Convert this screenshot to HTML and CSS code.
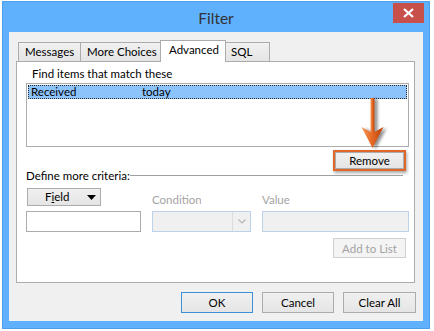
FILE: index.html
```html
<!DOCTYPE html>
<html lang="en">
<head>
  <meta charset="UTF-8">
  <title>Filter</title>
  <link rel="stylesheet" href="styles.css">
</head>
<body>
  <div class="window">
    <div class="titlebar">
      <span class="title">Filter</span>
      <button class="close" aria-label="Close">
        <svg width="11" height="10" viewBox="0 0 11 10"><path d="M1 1 L10 9 M10 1 L1 9" stroke="#fff" stroke-width="2.2"/></svg>
      </button>
    </div>
    <div class="client">
      <div class="tabs">
        <div class="tab tab-messages">Messages</div>
        <div class="tab tab-more">More Choices</div>
        <div class="tab tab-advanced active">Advanced</div>
        <div class="tab tab-sql">SQL</div>
      </div>
      <div class="panel">
        <div class="find-label">Find items that match these</div>
        <div class="listbox">
          <div class="list-row selected">
            <span class="col-field">Received</span>
            <span class="col-cond">today</span>
          </div>
        </div>
        <div class="remove-row">
          <div class="highlight">
            <button class="btn btn-remove">Remove</button>
          </div>
        </div>
        <div class="section-head">
          <span>Define more criteria:</span>
          <span class="rule"></span>
        </div>
        <div class="criteria">
          <button class="btn btn-field"><span>F<u>i</u>eld</span>
            <svg width="9" height="5" viewBox="0 0 9 5"><path d="M0 0 H9 L4.5 5 Z" fill="#000"/></svg>
          </button>
          <div class="crit-label cond-label">Condition</div>
          <div class="crit-label">Value</div>
          <input class="text-input" type="text">
          <div class="combo disabled">
            <span class="combo-text"></span>
            <span class="combo-btn">
              <svg width="8" height="5" viewBox="0 0 8 5"><path d="M0.5 0.5 L4 4 L7.5 0.5" stroke="#b5b5b5" stroke-width="1.2" fill="none"/></svg>
            </span>
          </div>
          <input class="text-input disabled" type="text" disabled>
        </div>
        <div class="add-row">
          <button class="btn btn-add" disabled>Add to List</button>
        </div>
        <svg class="callout-arrow" width="30" height="56" viewBox="0 0 30 56">
          <defs>
            <linearGradient id="arrowFill" x1="0" x2="1" y1="0" y2="0">
              <stop offset="0" stop-color="#f59a5e"/>
              <stop offset="0.45" stop-color="#e86a24"/>
              <stop offset="1" stop-color="#b8420c"/>
            </linearGradient>
          </defs>
          <rect x="10.5" y="3" width="4" height="36" fill="url(#arrowFill)"/>
          <path d="M1.5 32 L12.5 38 L23.5 32 L12.5 53 Z" fill="url(#arrowFill)"/>
        </svg>
      </div>
      <div class="actions">
        <button class="btn btn-dialog default">OK</button>
        <button class="btn btn-dialog">Cancel</button>
        <button class="btn btn-dialog btn-clear">Clear All</button>
      </div>
    </div>
  </div>
</body>
</html>
```

FILE: styles.css
```css
body {
  margin: 0;
  background: #fff;
  font-family: Lato, 'Noto Sans', sans-serif;
  font-size: 11.5px;
  color: #000;
}
.window {
  margin: 1px 0 0 2px;
  width: 428px;
  height: 328px;
  box-sizing: border-box;
  background: #5fb1fd;
  border: 1px solid #4f9fe8;
  padding: 0 6px 7px;
  display: flex;
  flex-direction: column;
}
.titlebar {
  position: relative;
  height: 30px;
  display: flex;
  align-items: center;
  justify-content: center;
}
.title {
  font-size: 15.5px;
  color: #333;
  margin-top: 2px;
}
.close {
  position: absolute;
  top: 1px;
  right: -1px;
  width: 31px;
  height: 20px;
  border: none;
  padding: 0;
  background: #c7504b;
  display: flex;
  align-items: center;
  justify-content: center;
}
.client {
  flex: 1;
  background: #f0f0f0;
  display: flex;
  flex-direction: column;
  padding-top: 8px;
}
.tabs {
  display: flex;
  align-items: flex-end;
  height: 21px;
  margin-left: 9px;
}
.tab {
  box-sizing: border-box;
  height: 19px;
  line-height: 18px;
  padding-left: 6px;
  white-space: nowrap;
  border: 1px solid #acacac;
  border-bottom: none;
  background: linear-gradient(#f0f0f0, #e5e5e5);
  color: #000;
  margin-left: -1px;
}
.tab-messages { width: 63px; margin-left: 0; }
.tab-more { width: 81px; }
.tab-advanced { width: 66px; padding-left: 8px; }
.tab-sql { width: 45px; padding-left: 5px; }
.tab.active {
  position: relative;
  z-index: 1;
  height: 22px;
  margin-bottom: -1px;
  line-height: 18px;
  background: #fff;
}
.panel {
  position: relative;
  box-sizing: border-box;
  margin-left: 7px;
  width: 399px;
  height: 222px;
  background: #fff;
  border: 1px solid #acacac;
  padding: 4px 5px 0 9px;
}
.find-label {
  margin-left: 6px;
  height: 16px;
  line-height: 16px;
  margin-bottom: 1px;
}
.listbox {
  box-sizing: border-box;
  height: 64px;
  border: 1px solid #acacac;
  padding: 1px;
}
.list-row {
  box-sizing: border-box;
  height: 14px;
  line-height: 12px;
  display: flex;
  padding-left: 2px;
}
.list-row.selected {
  background: #8cc3fb;
  border: 1px dotted #2b2b2b;
}
.col-field { width: 111px; }
.remove-row {
  display: flex;
  justify-content: flex-end;
  margin-top: 3px;
  padding-right: 3px;
}
.highlight {
  border: 2px solid #e0672b;
  box-shadow: 1px 2px 3px rgba(0, 0, 0, 0.35);
}
.btn {
  font-family: inherit;
  font-size: 11.5px;
  color: #000;
  box-sizing: border-box;
  border: 1px solid #acacac;
  background: linear-gradient(#f0f0f0, #e5e5e5);
  padding: 0;
  margin: 0;
}
.btn-remove {
  display: block;
  width: 69px;
  height: 17px;
  line-height: 14px;
}
.section-head {
  display: flex;
  align-items: center;
  height: 16px;
  margin-top: -4px;
}
.rule {
  flex: 1;
  height: 1px;
  background: #a0a0a0;
  margin-right: 6px;
  margin-top: 1px;
}
.criteria {
  display: grid;
  grid-template-columns: 115px 99px 147px;
  column-gap: 11px;
  grid-template-rows: 18px 21px;
  row-gap: 5px;
  margin-top: 5px;
}
.btn-field {
  width: 74px;
  height: 18px;
  margin-left: 1px;
  display: flex;
  align-items: center;
  padding-left: 17px;
  gap: 18px;
  line-height: 14px;
}
.crit-label {
  color: #a3a3a3;
  align-self: end;
  line-height: 16px;
  margin-bottom: -2px;
}
.cond-label {
  width: 49px;
  overflow: hidden;
  white-space: nowrap;
}
.text-input {
  box-sizing: border-box;
  width: 100%;
  height: 21px;
  border: 1px solid #acacac;
  background: #fff;
  margin: 0;
  padding: 0 3px;
  font-family: inherit;
  font-size: 11.5px;
}
.text-input.disabled {
  border-color: #bcd2ea;
  background: #f0f0f0;
}
.combo {
  box-sizing: border-box;
  height: 21px;
  display: flex;
  border: 1px solid #bcd2ea;
  background: #f0f0f0;
}
.combo-text { flex: 1; }
.combo-btn {
  width: 17px;
  border-left: 1px solid #dcdcdc;
  display: flex;
  align-items: center;
  justify-content: center;
}
.add-row {
  display: flex;
  justify-content: flex-end;
  padding-right: 3px;
  margin-top: 6px;
}
.btn-add {
  width: 73px;
  height: 20px;
  color: #a3a3a3;
  background: #f4f4f4;
  border-color: #d0d0d0;
}
.callout-arrow {
  position: absolute;
  left: 343px;
  top: 33px;
  filter: drop-shadow(3px 1px 1.5px rgba(0, 0, 0, 0.45));
}
.actions {
  display: flex;
  justify-content: flex-end;
  gap: 9px;
  margin-top: 9px;
  padding-right: 7px;
}
.btn-dialog {
  width: 72px;
  height: 21px;
}
.btn-clear { width: 73px; }
.btn-dialog.default {
  border-color: #3d8fd6;
}
```
